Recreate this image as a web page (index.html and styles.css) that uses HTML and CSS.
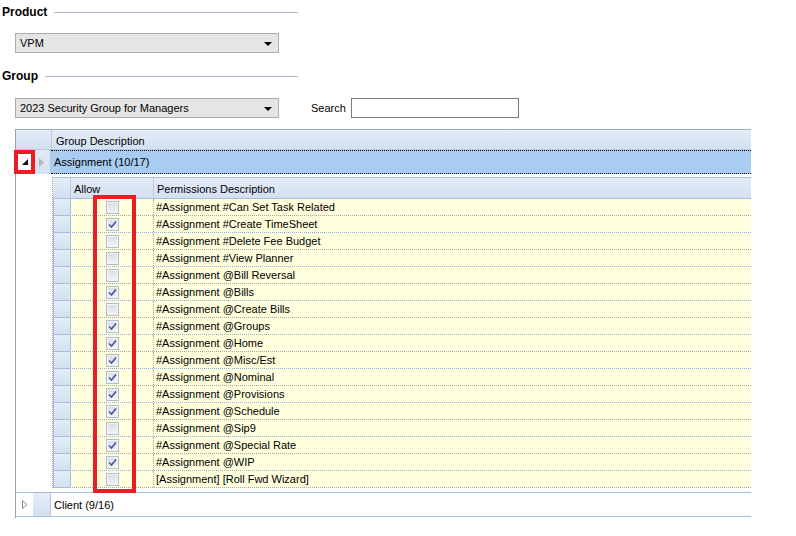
FILE: index.html
```html
<!DOCTYPE html>
<html lang="en">
<head>
    <meta charset="UTF-8">
    <title>Security Group Permissions</title>
    <link rel="stylesheet" href="styles.css">
</head>
<body>
    <!-- Product -->
    <div class="legend"><span>Product</span></div>
    <div class="combo combo-product">VPM<i class="arrow"></i></div>

    <!-- Group -->
    <div class="legend"><span>Group</span></div>
    <div class="filter-row">
        <div class="combo">2023 Security Group for Managers<i class="arrow"></i></div>
        <label class="search-label" for="search">Search</label>
        <input id="search" class="search" type="text">
    </div>

    <!-- Permissions grid -->
    <div class="grid">
        <div class="grid-head">
            <div class="corner"></div>
            <div class="head-cell">Group Description</div>
        </div>

        <div class="group-row selected">
            <div class="expand">
                <svg width="6" height="6" viewBox="0 0 6 6"><path d="M6 0V6H0Z" fill="#111"/></svg>
                <span class="mark mark-expand"></span>
            </div>
            <div class="indicator">
                <svg width="5" height="9" viewBox="0 0 5 9"><path d="M0 0L5 4.5L0 9Z" fill="#b4b8c0"/></svg>
            </div>
            <div class="group-text">Assignment (10/17)</div>
        </div>

        <div class="detail">
            <div class="detail-head">
                <div class="row-head"></div>
                <div class="allow">Allow</div>
                <div class="desc">Permissions Description</div>
            </div>
            <div id="rows"></div>
            <span class="mark mark-allow"></span>
        </div>

        <div class="group-row">
            <div class="expand">
                <svg width="6" height="9" viewBox="0 0 6 9"><path d="M0.5 0.5L5 4.5L0.5 8.5Z" fill="#fff" stroke="#8a8a8a"/></svg>
            </div>
            <div class="indicator"></div>
            <div class="group-text">Client (9/16)</div>
        </div>
    </div>

    <script>
        // permission name, allowed
        const permissions = [
            ['#Assignment #Can Set Task Related', false],
            ['#Assignment #Create TimeSheet', true],
            ['#Assignment #Delete Fee Budget', false],
            ['#Assignment #View Planner', false],
            ['#Assignment @Bill Reversal', false],
            ['#Assignment @Bills', true],
            ['#Assignment @Create Bills', false],
            ['#Assignment @Groups', true],
            ['#Assignment @Home', true],
            ['#Assignment @Misc/Est', true],
            ['#Assignment @Nominal', true],
            ['#Assignment @Provisions', true],
            ['#Assignment @Schedule', true],
            ['#Assignment @Sip9', false],
            ['#Assignment @Special Rate', true],
            ['#Assignment @WIP', true],
            ['[Assignment] [Roll Fwd Wizard]', false]
        ];

        const tick = '<svg width="9" height="9" viewBox="0 0 9 9"><path d="M1 4.5L3.5 7L8 1.5" fill="none" stroke="#3d5a99" stroke-width="1.6"/></svg>';

        const rows = document.getElementById('rows');
        permissions.forEach(([name, allowed], i) => {
            const row = document.createElement('div');
            row.className = 'row' + (i % 2 ? ' odd' : '');
            row.innerHTML =
                '<div class="row-head"></div>' +
                '<div class="allow"><span class="check">' + (allowed ? tick : '') + '</span></div>' +
                '<div class="desc">' + name + '</div>';
            rows.appendChild(row);
        });
    </script>
</body>
</html>
```

FILE: styles.css
```css
body {
    margin: 0;
    font-family: "Liberation Sans", Arial, sans-serif;
    font-size: 11px;
    color: #000;
    background: #fff;
}

.legend {
    display: flex;
    align-items: center;
    width: 298px;
    height: 24px;
    padding-left: 2px;
    box-sizing: border-box;
    font-size: 12px;
    font-weight: bold;
}

.legend::after {
    content: "";
    flex: 1;
    border-top: 1px solid #a9b5cc;
    margin-left: 7px;
}

.combo {
    position: relative;
    width: 264px;
    height: 20px;
    box-sizing: border-box;
    margin-left: 15px;
    padding: 3px 0 0 4px;
    background: #e5e5e5;
    border: 1px solid #adadad;
}

.combo-product {
    margin-top: 9px;
    margin-bottom: 11px;
}

.combo .arrow {
    position: absolute;
    right: 6px;
    top: 8px;
    border-left: 4px solid transparent;
    border-right: 4px solid transparent;
    border-top: 4px solid #000;
}

.filter-row {
    display: flex;
    align-items: center;
    margin-top: 10px;
}

.search-label {
    margin: 0 6px 0 32px;
}

.search {
    width: 168px;
    height: 20px;
    box-sizing: border-box;
    margin: 0 0 0 -1px;
    border: 1px solid #7a7a7a;
    padding: 0 3px;
    font: inherit;
}

/* grid */
.grid {
    margin: 11px 0 0 15px;
    width: 735px;
    border-left: 1px solid #a0a0a0;
    padding-bottom: 1px;
}

.grid-head {
    display: flex;
    height: 21px;
    box-sizing: border-box;
    border-top: 1px solid #9fb0cc;
    border-bottom: 1px solid #b9c8dd;
    background: linear-gradient(#e4edf8, #d3e0f1);
}

.corner {
    width: 35px;
    border-right: 1px solid #b9c8dd;
}

.head-cell {
    flex: 1;
    padding: 5px 0 0 4px;
}

.group-row {
    display: flex;
    height: 25px;
    box-sizing: border-box;
    border-top: 1px solid #a9bcdc;
    border-bottom: 1px solid #a9bcdc;
    margin-top: 4px;
}

.group-row.selected {
    border: none;
    margin-top: 0;
    height: 24px;
}

.expand {
    position: relative;
    width: 17px;
    display: flex;
    align-items: center;
    justify-content: center;
}

.indicator {
    width: 18px;
    display: flex;
    align-items: center;
    justify-content: center;
    background: linear-gradient(#e4edf8, #d3e0f1);
    border-right: 1px solid #b9c8dd;
    box-sizing: border-box;
}

.group-text {
    flex: 1;
    padding: 6px 0 0 3px;
}

.selected .indicator {
    background: linear-gradient(#e0eaf6, #d5e2f2);
}

.selected .group-text {
    background: #a8cdf1;
    border-top: 1px dotted #000;
    border-bottom: 1px dotted #000;
    padding-top: 5px;
}

/* detail view */
.detail {
    position: relative;
    margin: 3px 0 0 36px;
    border-left: 1px dotted #a0a0a0;
}

.detail-head,
.row {
    display: flex;
}

.detail-head {
    height: 22px;
    box-sizing: border-box;
    border-top: 1px solid #a9bcdc;
    border-bottom: 1px solid #a9bcdc;
    background: linear-gradient(#e4edf8, #d3e0f1);
}

.detail-head .allow,
.detail-head .desc {
    padding: 5px 0 0 3px;
}

.detail-head .desc {
    border-left: 1px solid #b9c8dd;
}

.row-head {
    width: 18px;
    box-sizing: border-box;
    border-right: 1px solid #b9c8dd;
}

.allow {
    width: 82px;
    box-sizing: border-box;
}

.desc {
    flex: 1;
}

.row {
    height: 17px;
    box-sizing: border-box;
    background: #ffffdd;
    border-bottom: 1px dotted #a6a6a6;
}

.row.odd {
    border-bottom-color: #8fb1e8;
}

.row .row-head {
    background: linear-gradient(#e4edf8, #d3e0f1);
    border: 1px solid #a9bcdc;
    border-top: none;
    margin-bottom: -1px;
}

.row .allow {
    display: flex;
    justify-content: center;
    align-items: center;
}

.row .desc {
    border-left: 1px dotted #a6a6a6;
    padding: 2px 0 0 2px;
}

.check {
    width: 13px;
    height: 13px;
    box-sizing: border-box;
    border: 1px solid #b0bccf;
    background: linear-gradient(#d9dde3, #f3f4f6);
    box-shadow: inset 0 0 0 1px #f5f6f8;
    display: flex;
    align-items: center;
    justify-content: center;
}

/* red annotation boxes */
.mark {
    position: absolute;
    border: 4px solid #ec1c24;
    box-sizing: border-box;
}

.mark-expand {
    left: -2px;
    top: 0;
    width: 21px;
    height: 24px;
}

.mark-allow {
    left: 40px;
    top: 18px;
    width: 43px;
    height: 298px;
}
```
